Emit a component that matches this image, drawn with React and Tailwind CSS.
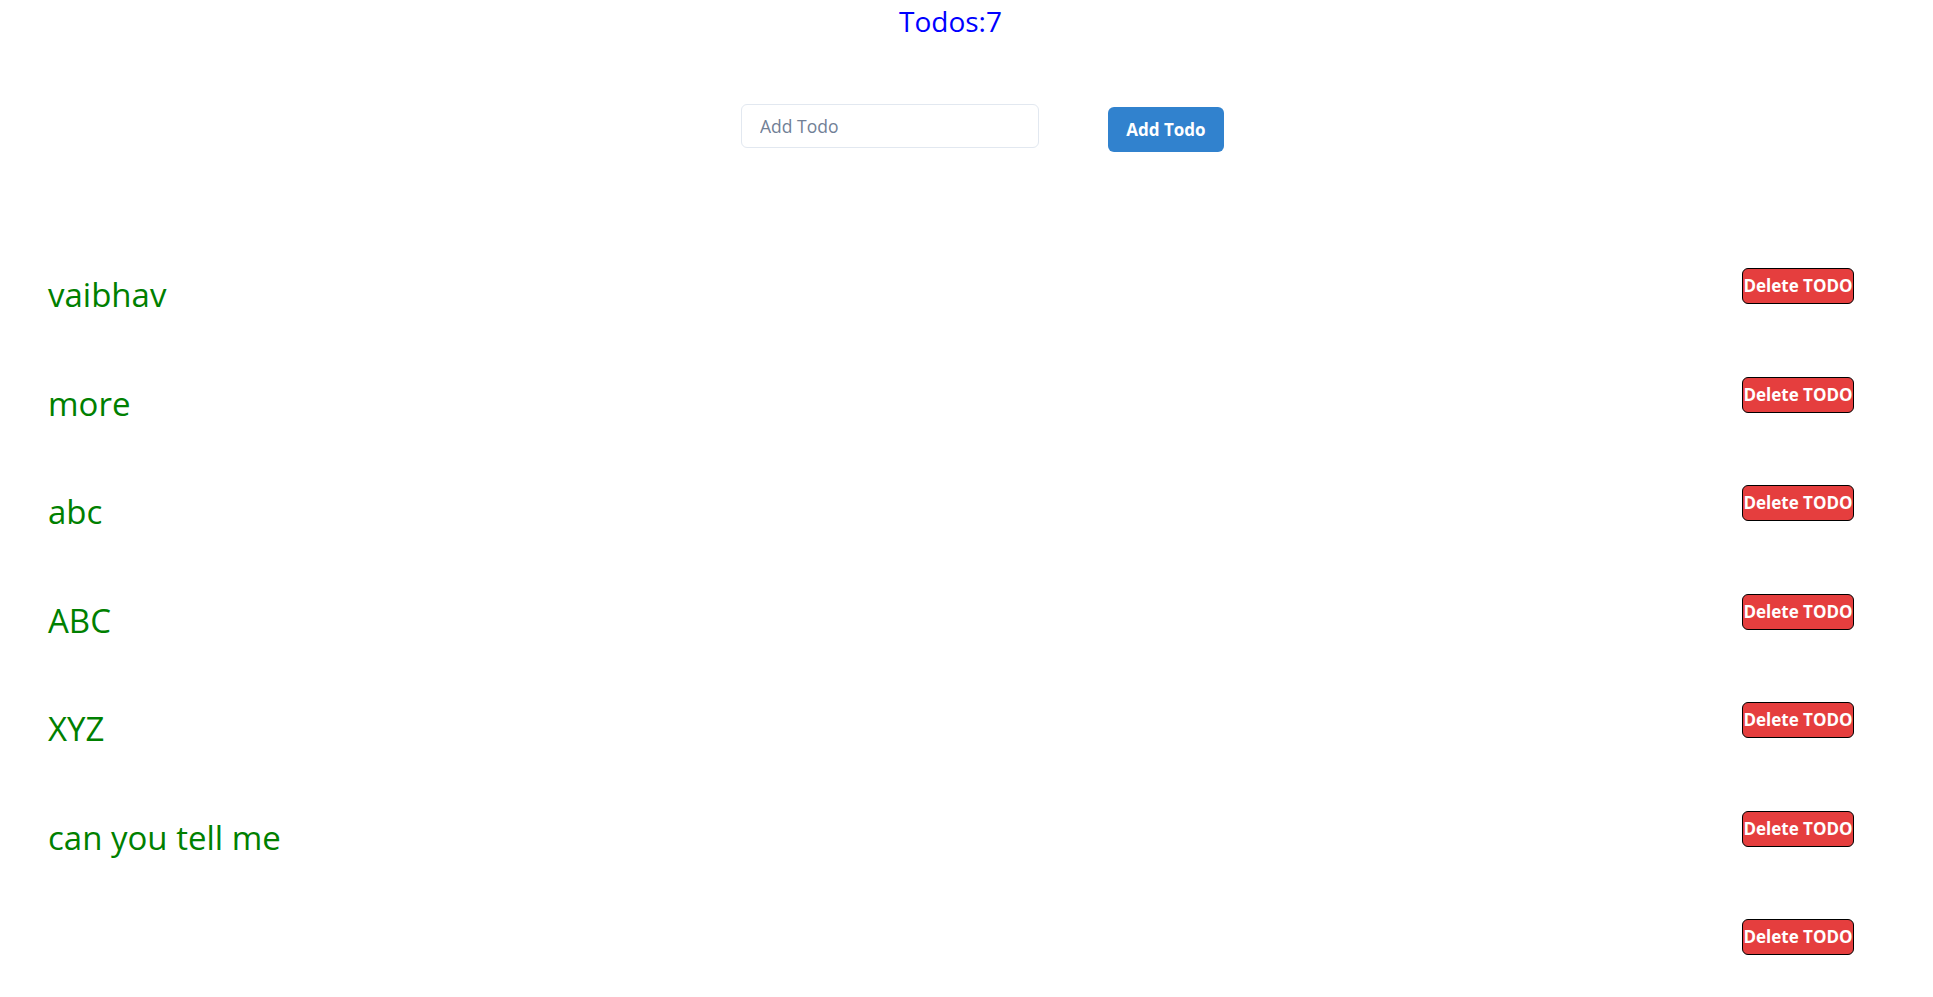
import { useState } from 'react';

const initialTodos = ['vaibhav', 'more', 'abc', 'ABC', 'XYZ', 'can you tell me', ''];

export default function App() {
  const [todos, setTodos] = useState(initialTodos);
  const [text, setText] = useState('');

  const addTodo = () => {
    setTodos([...todos, text]);
    setText('');
  };

  const deleteTodo = (index) => {
    setTodos(todos.filter((_, i) => i !== index));
  };

  return (
    <div className="min-h-screen bg-white font-['Open_Sans',sans-serif]">
      <div className="flex justify-center pt-[2px] mr-[32px]">
        <h1 className="text-[28px] leading-[38px] text-[#0000ff]">Todos:{todos.length}</h1>
      </div>

      <div className="flex justify-center items-start mt-[64px] ml-[32px]">
        <input
          value={text}
          onChange={(e) => setText(e.target.value)}
          placeholder="Add Todo"
          className="w-[298px] h-[44px] px-[18px] text-[17.5px] border border-[#e2e8f0] rounded-md outline-none placeholder:text-[#718096]"
        />
        <button
          onClick={addTodo}
          className="ml-[69px] mt-[3px] w-[116px] h-[45px] bg-[#3182ce] text-white text-[17px] font-bold rounded-md"
        >
          Add Todo
        </button>
      </div>

      <div className="mt-[116px] flex flex-col gap-[59.5px] pl-[48px] pr-[79px]">
        {todos.map((todo, index) => (
          <div key={index} className="flex justify-between items-start">
            <p className="mt-[5px] text-[33px] leading-[44px] text-[#008000] min-h-[44px]">{todo}</p>
            <button
              onClick={() => deleteTodo(index)}
              className="w-[112px] h-[36px] bg-[#e53e3e] border border-black rounded-md text-white text-[17px] font-bold whitespace-nowrap"
            >
              Delete TODO
            </button>
          </div>
        ))}
      </div>
    </div>
  );
}
